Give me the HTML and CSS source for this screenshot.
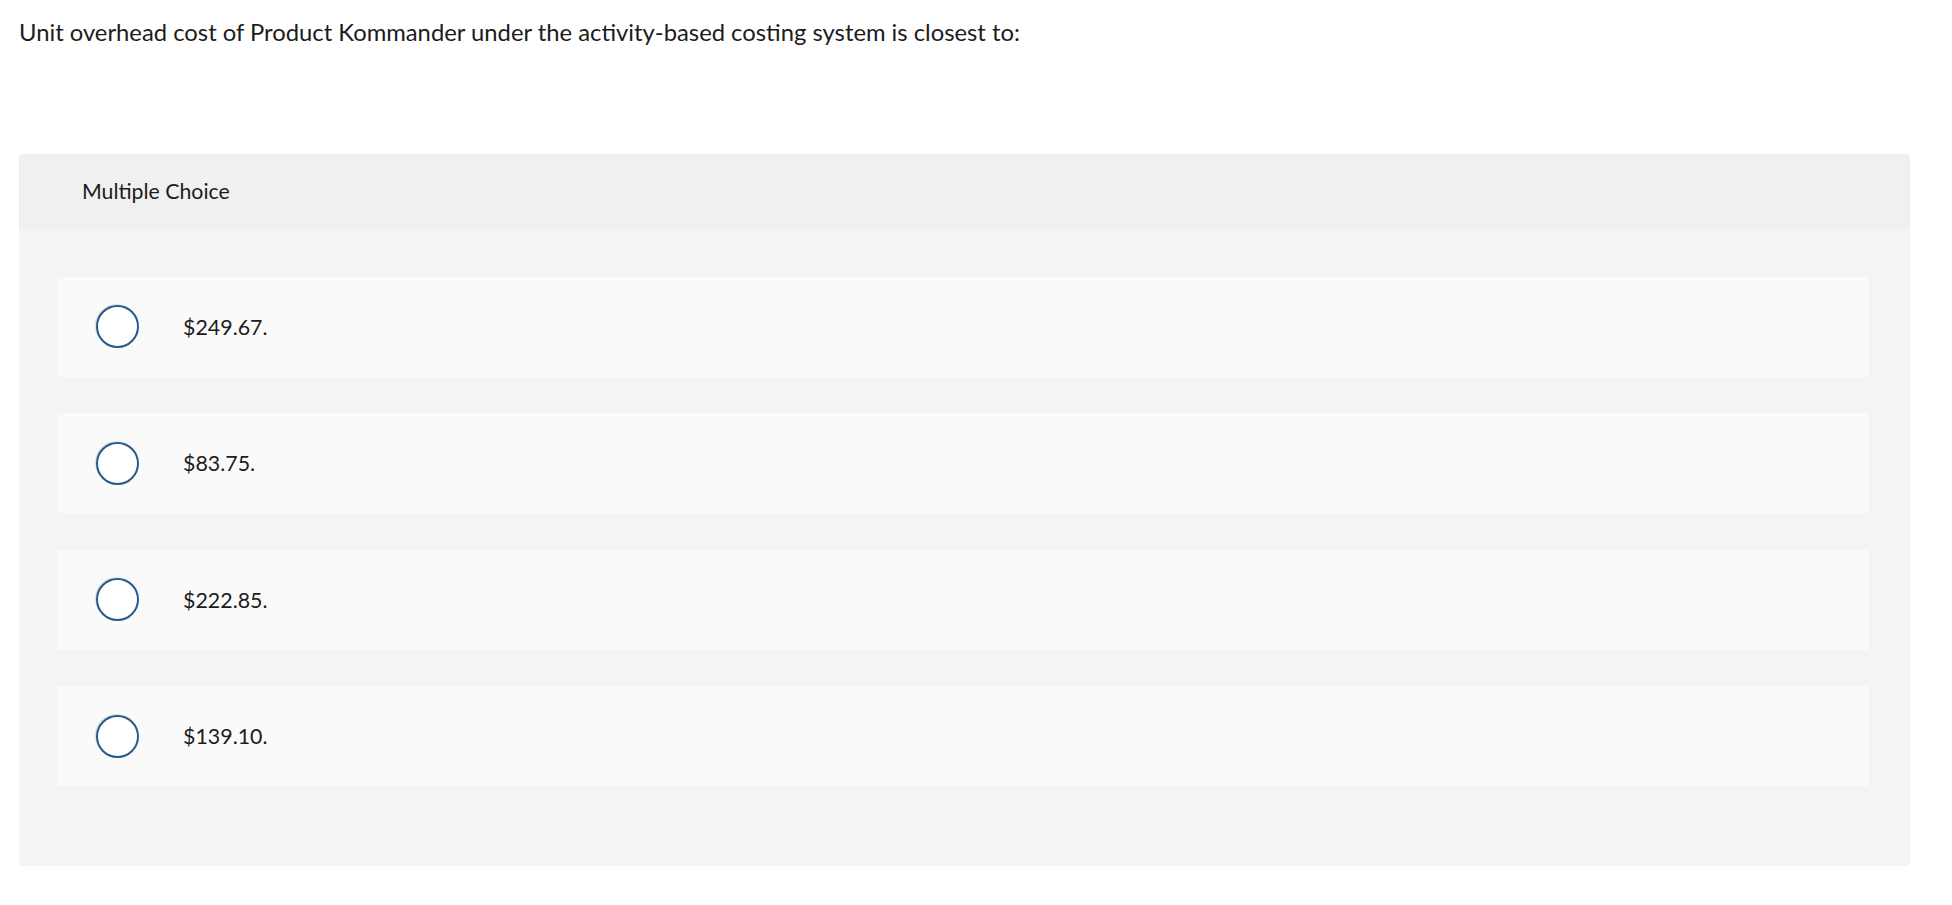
FILE: index.html
```html
<!DOCTYPE html>
<html lang="en">
<head>
<meta charset="utf-8">
<title>Multiple Choice</title>
<link rel="stylesheet" href="styles.css">
</head>
<body>
<p class="prompt">Unit overhead cost of Product Kommander under the activity-based costing system is closest to:</p>
<section class="panel">
  <header class="panel-header">Multiple Choice</header>
  <div class="panel-body">
    <label class="option"><span class="radio"></span><span class="option-text">$249.67.</span></label>
    <label class="option"><span class="radio"></span><span class="option-text">$83.75.</span></label>
    <label class="option"><span class="radio"></span><span class="option-text">$222.85.</span></label>
    <label class="option"><span class="radio"></span><span class="option-text">$139.10.</span></label>
  </div>
</section>
</body>
</html>
```
FILE: styles.css
```css
html, body {
  margin: 0;
  padding: 0;
  background: #ffffff;
}
body {
  font-family: Lato, "Open Sans", Arial, sans-serif;
  color: #1c1c1c;
}
.prompt {
  margin: 18px 0 0 19px;
  font-size: 23.8px;
  line-height: 1.2;
}
.panel {
  margin: 107px 42px 0 19px;
  background: #f4f4f4;
  border-radius: 4px;
}
.panel-header {
  height: 75px;
  display: flex;
  align-items: center;
  padding-left: 63px;
  background: #f0f0f0;
  border-radius: 4px 4px 0 0;
  font-size: 21.3px;
}
.panel-body {
  display: flex;
  flex-direction: column;
  gap: 36.5px;
  padding: 48px 41px 80px 38px;
}
.option {
  height: 100px;
  display: flex;
  align-items: center;
  gap: 44px;
  padding-left: 39px;
  background: #fafafa;
  border-radius: 3px;
}
.radio {
  width: 43px;
  height: 43px;
  box-sizing: border-box;
  border: 2px solid #285a8e;
  border-radius: 50%;
  background: #ffffff;
  box-shadow: -1px -1px 1px rgba(0, 0, 0, 0.12);
  flex: none;
}
.option-text {
  font-size: 21.4px;
}
```
